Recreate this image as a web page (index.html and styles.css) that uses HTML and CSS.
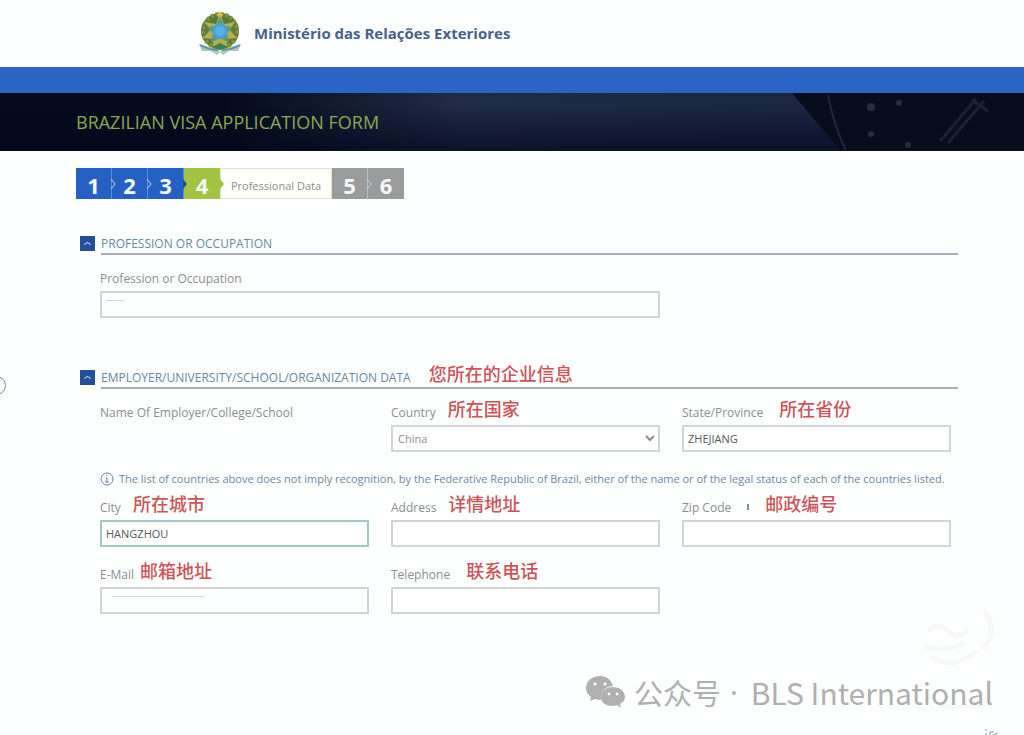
FILE: index.html
```html
<!DOCTYPE html>
<html lang="en">
<head>
    <meta charset="utf-8">
    <meta name="viewport" content="width=device-width, initial-scale=1">
    <title>Brazilian Visa Application Form</title>
    <link rel="stylesheet" href="styles.css">
</head>
<body>
    <!-- Ministry header -->
    <header class="site-header">
        <svg class="coat" viewBox="0 0 46 46" aria-hidden="true">
            <path d="M2 34 Q10 36 21 39 L23 42 L25 39 Q36 36 44 34 L41 41 L32 41 L26 45 L23 42 L20 45 L14 41 L5 41 Z" fill="#a9c7bf"/>
            <path d="M3 35 Q12 40 21 40 M43 35 Q34 40 25 40" fill="none" stroke="#5d93a6" stroke-width="2"/>
            <ellipse cx="23" cy="21" rx="19" ry="18" fill="#5c7a3c"/>
            <ellipse cx="23" cy="21" rx="17" ry="17" fill="none" stroke="#86913f" stroke-width="4" stroke-dasharray="3 2"/>
            <path d="M23 1 L26 5 L23 9 L20 5 Z" fill="#d9c04a"/>
            <path d="M23 4 L27 14 L38 12 L33 20 L40 28 L30 29 L30 38 L23 33 L16 38 L16 29 L6 28 L13 20 L8 12 L19 14 Z" fill="#b5b04e"/>
            <path d="M23 7 L27 16 L36 17 L30 23 L32 33 L23 28 L14 33 L16 23 L10 17 L19 16 Z" fill="#5a9d72"/>
            <circle cx="23" cy="21" r="8" fill="#4a9fd0"/>
            <circle cx="23" cy="21" r="5" fill="#55b2e4"/>
            <path d="M15 37 L23 33 L31 37 L23 40 Z" fill="#3f7e4e"/>
        </svg>
        <span class="ministry">Ministério das Relações Exteriores</span>
    </header>
    <div class="blue-bar"></div>

    <!-- Page title banner -->
    <div class="banner">
        <h1>BRAZILIAN VISA APPLICATION FORM</h1>
        <svg class="banner-art" viewBox="0 0 232 58" aria-hidden="true">
            <path d="M0 0 H232 V58 H49 Z" fill="#080d1b"/>
            <path d="M36 2 Q41 30 54 58" fill="none" stroke="#1f283b" stroke-width="2"/>
            <g fill="#252d3f">
                <circle cx="79" cy="14" r="4"/>
                <circle cx="107" cy="10" r="3"/>
                <circle cx="79" cy="41" r="3"/>
                <circle cx="116" cy="52" r="3"/>
            </g>
            <path d="M148 48 L184 6 M156 50 L192 8 M180 7 L196 18" fill="none" stroke="#1b212e" stroke-width="3"/>
        </svg>
    </div>

    <main>
        <!-- Progress of the application -->
        <ol class="steps">
            <li class="step done">1<svg class="notch" viewBox="0 0 6 12"><path d="M1 1 L5 6 L1 11"/></svg></li>
            <li class="step done">2<svg class="notch" viewBox="0 0 6 12"><path d="M1 1 L5 6 L1 11"/></svg></li>
            <li class="step done">3<svg class="notch solid-blue" viewBox="0 0 6 12"><path d="M1 1 L5 6 L1 11 Z"/></svg></li>
            <li class="step current">4<svg class="notch solid-green" viewBox="0 0 6 12"><path d="M1 1 L5 6 L1 11 Z"/></svg></li>
            <li class="step-name">Professional Data</li>
            <li class="step">5<svg class="notch" viewBox="0 0 6 12"><path d="M1 1 L5 6 L1 11"/></svg></li>
            <li class="step">6</li>
        </ol>

        <form>
            <section class="panel">
                <div class="panel-head">
                    <button type="button" class="toggle" aria-label="Collapse profession">
                        <svg viewBox="0 0 14 14"><path d="M4 8 L7 6 L10 8"/></svg>
                    </button>
                    <h2>PROFESSION OR OCCUPATION</h2>
                </div>
                <div class="fields">
                    <div class="field wide">
                        <div class="field-head"><label for="profession">Profession or Occupation</label></div>
                        <input type="text" id="profession" class="erased-short">
                    </div>
                </div>
            </section>

            <section class="panel">
                <div class="panel-head">
                    <button type="button" class="toggle" aria-label="Collapse employer data">
                        <svg viewBox="0 0 14 14"><path d="M4 8 L7 6 L10 8"/></svg>
                    </button>
                    <h2>EMPLOYER/UNIVERSITY/SCHOOL/ORGANIZATION DATA</h2>
                    <span class="hint" lang="zh">您所在的企业信息</span>
                </div>
                <div class="fields">
                    <div class="field">
                        <div class="field-head"><span>Name Of Employer/College/School</span></div>
                    </div>
                    <div class="field">
                        <div class="field-head"><label for="country">Country</label><span class="hint" lang="zh">所在国家</span></div>
                        <select id="country">
                            <option>China</option>
                        </select>
                    </div>
                    <div class="field">
                        <div class="field-head far"><label for="state">State/Province</label><span class="hint" lang="zh">所在省份</span></div>
                        <input type="text" id="state" value="ZHEJIANG">
                    </div>
                </div>

                <p class="note">
                    <svg viewBox="0 0 14 14" aria-hidden="true"><circle cx="7" cy="7" r="6"/><path d="M7 3 V4 M6 6 H7 V10 M5 10 H9"/></svg>
                    <span>The list of countries above does not imply recognition, by the Federative Republic of Brazil, either of the name or of the legal status of each of the countries listed.</span>
                </p>

                <div class="fields after-note">
                    <div class="field">
                        <div class="field-head"><label for="city">City</label><span class="hint" lang="zh">所在城市</span></div>
                        <input type="text" id="city" class="active" value="HANGZHOU">
                    </div>
                    <div class="field">
                        <div class="field-head"><label for="address">Address</label><span class="hint" lang="zh">详情地址</span></div>
                        <input type="text" id="address">
                    </div>
                    <div class="field">
                        <div class="field-head far"><label for="zip">Zip Code</label><span class="tick"></span><span class="hint" lang="zh">邮政编号</span></div>
                        <input type="text" id="zip">
                    </div>
                    <div class="field">
                        <div class="field-head near"><label for="email">E-Mail</label><span class="hint" lang="zh">邮箱地址</span></div>
                        <input type="text" id="email" class="erased-long">
                    </div>
                    <div class="field">
                        <div class="field-head far"><label for="phone">Telephone</label><span class="hint" lang="zh">联系电话</span></div>
                        <input type="text" id="phone">
                    </div>
                </div>
            </section>
        </form>
    </main>

    <!-- Marks that lie over the page -->
    <div class="edge-ring"></div>
    <svg class="stamp" viewBox="0 0 80 140" aria-hidden="true">
        <path d="M8 36 Q18 26 28 36 T48 34 M4 52 Q24 58 44 48 M64 14 Q80 40 62 54 M10 62 Q36 76 56 56 M16 112 H66" fill="none" stroke="#f8f8f8" stroke-width="5"/>
    </svg>
    <svg class="corner-mark" viewBox="0 0 16 6" aria-hidden="true">
        <path d="M2 0 V2 M2 4 V6 M6 6 V3 H10 M9 6 L14 4" fill="none" stroke="#999" stroke-width="1"/>
    </svg>
    <div class="watermark">
        <svg viewBox="0 0 39 32" aria-hidden="true">
            <path d="M14 0 C6 0 0 5 0 12 C0 16 2 19 5 21 L4 25 L9 23 Q12 24 15 24 C14 15 20 10 27 10 C26 4 20 0 14 0 Z"/>
            <path d="M27 11 C20 11 15 15 15 21 C15 27 20 30 27 30 Q29 30 31 29 L35 32 L34 28 C37 26 39 24 39 21 C39 15 33 11 27 11 Z"/>
            <g fill="#fff">
                <circle cx="9" cy="8" r="1.6"/>
                <circle cx="19" cy="8" r="1.6"/>
                <circle cx="23" cy="18" r="1.4"/>
                <circle cx="31" cy="18" r="1.4"/>
            </g>
        </svg>
        <span lang="zh">公众号</span>
        <span class="dot">·</span>
        <span class="account">BLS International</span>
    </div>
</body>
</html>
```
FILE: styles.css
```css
* {
    box-sizing: border-box;
}

body {
    margin: 0;
    position: relative;
    min-height: 100vh;
    overflow-x: hidden;
    background-color: #fdfefe;
    font-family: "Open Sans", "Noto Sans CJK SC", sans-serif;
    font-size: 12px;
    color: #8b8e92;
}

/* Header with the coat of arms */
.site-header {
    display: flex;
    align-items: center;
    gap: 11px;
    height: 67px;
    padding: 0 0 2px 197px;
}

.coat {
    width: 46px;
    height: 46px;
}

.ministry {
    font-size: 15px;
    font-weight: bold;
    color: #486286;
}

.blue-bar {
    height: 26px;
    background-color: #2964c6;
}

/* Dark banner with the form title */
.banner {
    display: flex;
    align-items: center;
    justify-content: space-between;
    height: 58px;
    padding-left: 76px;
    background: linear-gradient(to bottom, rgba(3, 7, 25, 0) 20%, rgba(3, 7, 30, 0.7)), linear-gradient(to right, #050b1c 22%, #202c46 45%, #1b2740 75%);
}

.banner h1 {
    margin: 0;
    font-size: 18px;
    font-weight: normal;
    color: #8aa855;
}

.banner-art {
    width: 232px;
    height: 58px;
}

main {
    padding: 17px 66px 0 76px;
}

/* Step counter */
.steps {
    display: flex;
    width: max-content;
    margin: 0 0 34px;
    padding: 0;
    list-style: none;
}

.step {
    position: relative;
    width: 36px;
    height: 31px;
    line-height: 34px;
    border-right: 1px solid #b9bcbe;
    background-color: #999b9c;
    color: #f4f8fb;
    font-size: 22px;
    font-weight: bold;
    text-align: center;
}

.step:last-child {
    border-right: none;
}

.step.done {
    border-right-color: #5a8cda;
    background-color: #2560c4;
}

.step.current {
    border-right: none;
    background-color: #a3c345;
}

.step-name {
    width: 112px;
    height: 31px;
    line-height: 33px;
    border: 1px solid #dde5c8;
    background-color: #fefffb;
    font-size: 11px;
    text-align: center;
}

.notch {
    position: absolute;
    z-index: 1;
    top: 10px;
    right: -5px;
    width: 6px;
    height: 12px;
    fill: none;
    stroke: #c3d4ee;
}

.notch.solid-blue {
    fill: #214f8c;
    stroke: none;
}

.notch.solid-green {
    fill: #a3c345;
    stroke: none;
}

/* Form sections */
.panel {
    margin: 0 0 49px 4px;
}

.panel-head {
    display: flex;
    align-items: center;
    gap: 6px;
    height: 22px;
    padding-bottom: 2px;
    background: linear-gradient(#a6adbd, #a6adbd) 21px 100% / 100% 2px no-repeat;
}

.panel-head h2 {
    margin: 0;
    font-size: 12px;
    font-weight: normal;
    color: #6888a0;
}

.panel-head .hint {
    margin-left: 12px;
}

.toggle {
    width: 15px;
    height: 15px;
    padding: 0;
    border: none;
    background-color: #24509a;
    cursor: pointer;
}

.toggle svg {
    display: block;
    width: 15px;
    height: 15px;
    fill: none;
    stroke: #c5d8f2;
}

/* Three columns of fields */
.fields {
    display: grid;
    grid-template-columns: repeat(3, 1fr);
    gap: 17px 22px;
    padding: 13px 7px 0 20px;
}

.fields.after-note {
    padding-top: 8px;
}

.field {
    min-width: 0;
}

.field.wide {
    grid-column: span 2;
}

.field-head {
    display: flex;
    align-items: center;
    gap: 12px;
    height: 20px;
    margin-bottom: 3px;
}

.field-head.near {
    gap: 6px;
}

.field-head.far {
    gap: 16px;
}

/* Red translations, set a little above the label line */
.hint {
    padding-bottom: 8px;
    font-family: "Noto Sans CJK SC", sans-serif;
    font-size: 18px;
    font-weight: 500;
    line-height: 20px;
    color: #cb5558;
}

.tick {
    width: 2px;
    height: 6px;
    background-color: #8b8e92;
}

input,
select {
    display: block;
    width: 100%;
    height: 27px;
    padding: 0 4px;
    border: 2px solid #d3d4d6;
    border-radius: 0;
    background-color: #fefefe;
    font-family: inherit;
    font-size: 11px;
    color: #55585c;
}

select {
    padding: 0 1px;
    color: #8b8e92;
}

input.active {
    border-color: #9fc8c6;
}

.erased-short {
    background: linear-gradient(#d3d4d6, #d3d4d6) 4px 7px / 18px 1px no-repeat;
}

.erased-long {
    background: linear-gradient(#d3d4d6, #d3d4d6) 10px 7px / 92px 1px no-repeat;
}

.note {
    display: flex;
    align-items: center;
    gap: 5px;
    margin: 17px 0 0 20px;
    font-size: 11px;
    line-height: 20px;
    color: #7187a3;
}

.note svg {
    flex: none;
    width: 14px;
    height: 14px;
    fill: none;
    stroke: #66809a;
}

/* Overlays */
.edge-ring {
    position: absolute;
    top: 376px;
    left: -13px;
    width: 19px;
    height: 19px;
    border: 1px solid #888;
    border-radius: 50%;
}

.stamp {
    position: absolute;
    right: 24px;
    bottom: 0;
    width: 80px;
    height: 140px;
}

.corner-mark {
    position: absolute;
    right: 24px;
    bottom: 0;
    width: 16px;
    height: 6px;
}

.watermark {
    position: absolute;
    right: 31px;
    bottom: 21px;
    display: flex;
    align-items: center;
    gap: 9px;
    font-family: "Noto Sans CJK SC", sans-serif;
    font-size: 29px;
    line-height: 44px;
    color: #b0b0b0;
}

.watermark .dot {
    margin-right: 4px;
    font-family: "Noto Sans", sans-serif;
}

.watermark .account {
    font-size: 30px;
}

.watermark svg {
    width: 39px;
    height: 32px;
    fill: #b0b0b0;
}
```
